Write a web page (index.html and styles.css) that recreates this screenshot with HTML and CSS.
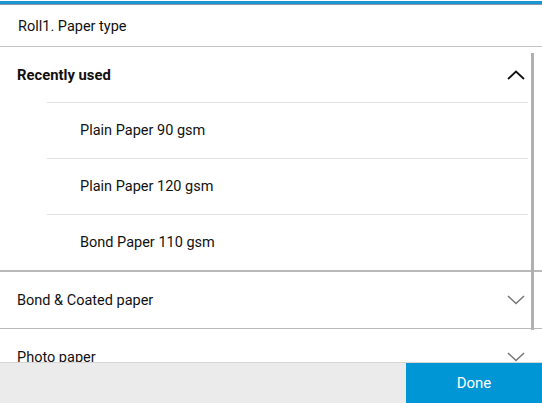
FILE: index.html
```html
<!DOCTYPE html>
<html>
<head>
<meta charset="utf-8">
<link rel="stylesheet" href="styles.css">
</head>
<body>
<div class="screen">
  <div class="topbar"></div>
  <div class="header">Roll1. Paper type</div>
  <div class="content">
    <div class="group open">
      <div class="group-head bold">
        <span>Recently used</span>
        <svg class="chev" width="18" height="10" viewBox="0 0 18 10"><path d="M1 9 L9 1.5 L17 9" fill="none" stroke="#111" stroke-width="1.8"/></svg>
      </div>
      <div class="sub">Plain Paper 90 gsm</div>
      <div class="sub">Plain Paper 120 gsm</div>
      <div class="sub">Bond Paper 110 gsm</div>
    </div>
    <div class="group">
      <div class="group-head">
        <span>Bond &amp; Coated paper</span>
        <svg class="chev" width="18" height="10" viewBox="0 0 18 10"><path d="M1 1 L9 8.5 L17 1" fill="none" stroke="#777" stroke-width="1.5"/></svg>
      </div>
    </div>
    <div class="group">
      <div class="group-head">
        <span>Photo paper</span>
        <svg class="chev" width="18" height="10" viewBox="0 0 18 10"><path d="M1 1 L9 8.5 L17 1" fill="none" stroke="#777" stroke-width="1.5"/></svg>
      </div>
    </div>
    <div class="scrollbar"></div>
  </div>
  <div class="footer">
    <div class="spacer"></div>
    <button class="done">Done</button>
  </div>
</div>
</body>
</html>
```
FILE: styles.css
```css
html, body {
  margin: 0;
  padding: 0;
  background: #fff;
}
body {
  font-family: Roboto, "Liberation Sans", sans-serif;
  color: #111;
  font-size: 14px;
}
.screen {
  width: 542px;
  height: 403px;
  display: flex;
  flex-direction: column;
  overflow: hidden;
}
.topbar {
  height: 3px;
  margin-top: 1px;
  background: #1a95d2;
  border-bottom: 1px solid #8a9aa5;
  flex: none;
}
.header {
  border-bottom: 1px solid #c4c4c4;
  display: flex;
  align-items: center;
  padding-left: 18px;
  padding-top: 1px;
  box-sizing: border-box;
  height: 42px;
  font-size: 14.5px;
  flex: none;
}
.content {
  position: relative;
  flex: 1;
  overflow: hidden;
}
.group {
  border-bottom: 1px solid #b9b9b9;
}
.group.open {
  border-bottom: 2px solid #b9b9b9;
}
.group-head {
  height: 55px;
  display: flex;
  align-items: center;
  justify-content: space-between;
  padding-left: 17px;
  padding-right: 17px;
  font-size: 14.5px;
}
.group-head.bold {
  font-weight: 700;
  font-size: 14.8px;
}
.group + .group .group-head {
  height: 56px;
}
.chev {
  display: block;
}
.sub {
  height: 55px;
  margin-left: 47px;
  margin-right: 14px;
  border-top: 1px solid #e2e2e2;
  display: flex;
  align-items: center;
  padding-left: 33px;
  font-size: 14.5px;
}
.scrollbar {
  position: absolute;
  left: 531px;
  top: 6px;
  width: 3px;
  height: 277px;
  background: #b0b0b0;
}
.footer {
  height: 40px;
  flex: none;
  display: flex;
  background: #ebebeb;
  border-top: 1px solid #d6d6d6;
}
.spacer {
  flex: 1;
}
.done {
  width: 136px;
  border: none;
  background: #0096d6;
  color: #fff;
  font-family: Roboto, "Liberation Sans", sans-serif;
  font-size: 15px;
  padding: 0;
}
```
